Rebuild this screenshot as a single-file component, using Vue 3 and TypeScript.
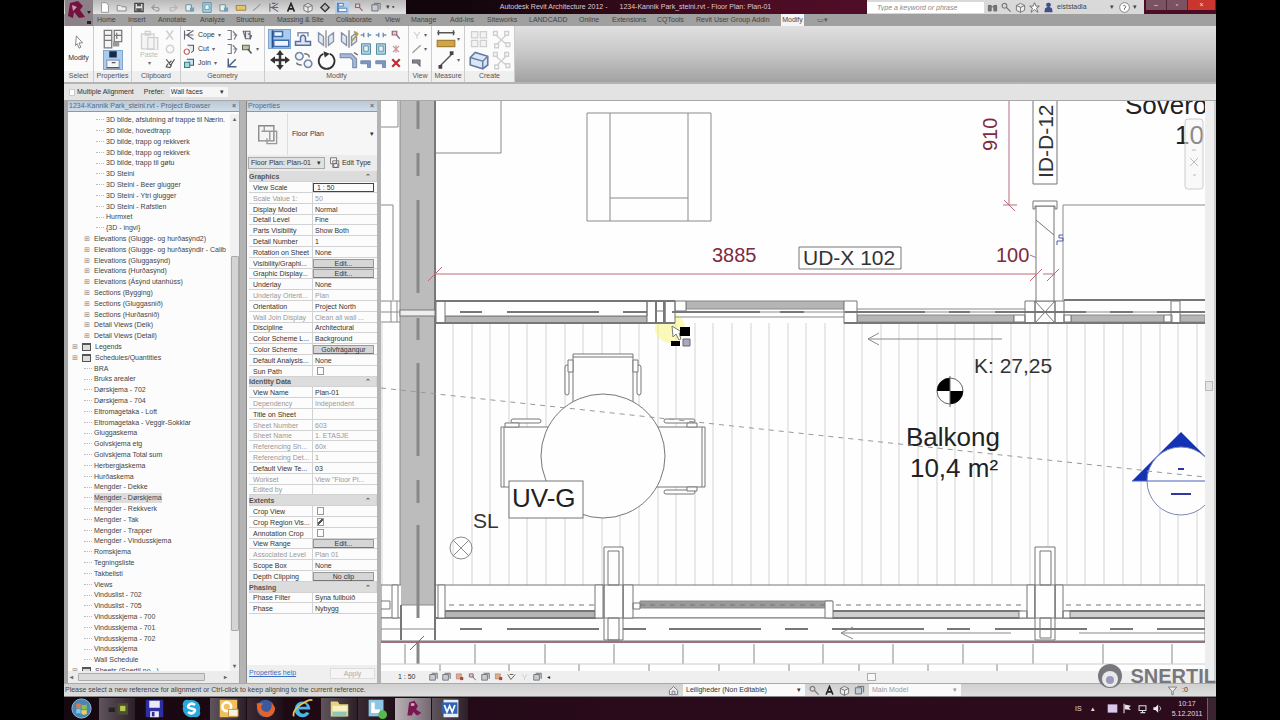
<script setup lang="ts">
interface Shape { d: string; f?: string; s?: string; w?: number }
interface TreeItem { t: string; lv: number; sel?: boolean; box?: boolean }
interface Prop { k: string; v?: string; kind?: 'head' | 'btn' | 'check' | 'on' | 'field'; dim?: boolean }
interface RibbonButton { id: string; label: string; text?: string; big?: boolean; on?: boolean; arrow?: boolean; col: number; row: number }
interface Panel { name: string; cls: string; buttons: RibbonButton[] }

const icons: Record<string, Shape[]> = {
  cursor: [{ d: 'M5 1l7 8h-4l2 5-2 1-2-5-2 2z', f: '#fff', s: '#777', w: 1 }],
  props: [{ d: 'M1 1h6v14H1zM9 1h6v9H9zM1 5h6M1 9h6M9 5h6M11 3v5', f: '#f4f4f6', s: '#777', w: 1 }, { d: 'M8 10h5v4H8z', f: '#999' }],
  palette: [{ d: 'M5 1h6v5H5z', f: '#1d2748' }, { d: 'M3 8h10v7H3z', f: '#f6f6f2', s: '#8b9bbc', w: 1 }, { d: 'M7 10h3M3 14h10', s: '#556', w: 1 }],
  paste: [{ d: 'M2 3h10v12H2zM5 1h4v3H5zM7 6h8v10H7z', f: '#f4f4f4', s: '#cfcfcf', w: 1 }],
  cut: [{ d: 'M3 2l9 12M12 2L3 14', s: '#d0d0d0', w: 2 }],
  ring: [{ d: 'M8 3a5 5 0 1 0 .1 0', s: '#d2d2d2', w: 2 }],
  brush: [{ d: 'M3 3l4 5 3-3M6 8l3 3 5-8M5 9l-2 4 5 1 2-3', s: '#555', w: 1.6 }],
  cope: [{ d: 'M2 2v12M2 8h12M14 2L5 8l9 6M5 2h5', s: '#667', w: 1.5 }],
  cutg: [{ d: 'M6 3h8v7l-3 3', f: '#e8eef6', s: '#557', w: 1.4 }, { d: 'M5 8a3.5 3.5 0 1 0 .1 0', f: '#fff', s: '#c05a5a', w: 1.6 }],
  join: [{ d: 'M5 3h9v8H9', f: '#cfe3f3', s: '#456', w: 1.4 }, { d: 'M2 7h7v7H2z', f: '#9fd8d8', s: '#387c86', w: 1.4 }],
  beam: [{ d: 'M2 2h5v12H2M9 3l5 5-3 6M10 8h5', s: '#778', w: 1.5 }],
  wall: [{ d: 'M3 3h9v10H6zM6 3v10M9 6l5 3-2 5', f: '#e9ecef', s: '#667', w: 1.5 }],
  paint: [{ d: 'M2 3h9v6H2z', f: '#b7c7a2', s: '#576850', w: 1.4 }, { d: 'M9 8l5 6', s: '#555', w: 2 }],
  axes: [{ d: 'M3 2v11h11M4 12l9-9', s: '#4b6388', w: 2 }],
  align: [{ d: 'M2 1v14', s: '#2b4f91', w: 1.4 }, { d: 'M3 2h7v4H3zM3 9h12v5H3z', f: '#eef5fc', s: '#3f6eae', w: 1.2 }],
  offset: [{ d: 'M2 13h12v-3H10V7a2 2 0 0 0-4 0v3H2z', f: '#dfe6f2', s: '#5570a5', w: 1.2 }, { d: 'M4 6V3h8v3', s: '#8792a8', w: 1.2 }],
  mirror: [{ d: 'M8 1v14', s: '#888', w: 1 }, { d: 'M2 3l4 3v7l-4-3zM14 3l-4 3v7l4-3z', f: '#e3e8ef', s: '#8595ae', w: 1.1 }],
  mirror2: [{ d: 'M8 1v14', s: '#777', w: 1 }, { d: 'M2 3l4 3v7l-4-3zM14 3l-4 3v7l4-3z', f: '#e3e8ef', s: '#8090ab', w: 1.1 }, { d: 'M12 2l3 2-5 6', s: '#b99a57', w: 1.4 }],
  move: [{ d: 'M8 0l3 4H9v3h3V5l4 3-4 3V9H9v3h2l-3 4-3-4h2V9H4v2L0 8l4-3v2h3V4H5z', f: '#333' }],
  copy: [{ d: 'M5 2a3 3 0 1 0 .1 0M12 8a3 3 0 1 0 .1 0', f: '#f2f4f8', s: '#7385a8', w: 1.2 }, { d: 'M9 3c3 0 4 1 4 3M7 12c-3 0-4-1-4-2', s: '#777', w: 1.2 }],
  rotate: [{ d: 'M11 3a6.3 6.3 0 1 1-5 0', s: '#333', w: 1.5 }, { d: 'M6 1l5 2-4 3z', f: '#333' }],
  trim: [{ d: 'M1 3h9l4 4v7h-3V8L9 6H1z', f: '#a8bad6', s: '#7e92b5', w: 1 }, { d: 'M12 2l3 2', s: '#666', w: 1.2 }],
  split: [{ d: 'M1 8h5M10 8h5M5 5v6M11 5v6', s: '#6f92b6', w: 1.8 }],
  array: [{ d: 'M2 1h12v14H2z', f: '#a9d5e4', s: '#4a8199', w: 1.2 }, { d: 'M5 4h6v7H5z', f: '#e7f6fb', s: '#567b98', w: 1 }],
  ext: [{ d: 'M1 5h13v9h-4V9H1z', f: '#7d96c2', s: '#64799f', w: 1 }],
  pin: [{ d: 'M3 3h6v5H3zM8 7l5 6', f: '#e1cdd7', s: '#8d6577', w: 1.6 }],
  unpin: [{ d: 'M4 4l8 8M12 4l-8 8M8 3v10', s: '#c99aa2', w: 1.6 }],
  del: [{ d: 'M3 3l10 10M13 3L3 13', s: '#c02c3a', w: 3 }],
  bulb: [{ d: 'M4 4l4 5 4-5M8 9v4', s: '#cfcfcf', w: 1.6 }],
  line: [{ d: 'M2 13L13 3', s: '#999', w: 1.6 }],
  flip: [{ d: 'M2 4h10v8l-4-4H2z', f: '#888', s: '#667', w: 1.4 }],
  ruler: [{ d: 'M1 9h14v5H1z', f: '#cfa545', s: '#a47f34', w: 1 }, { d: 'M1 3h14M2 1v4M14 1v4', s: '#555', w: 1.2 }],
  dim: [{ d: 'M3 13L13 3', s: '#555', w: 1.2 }, { d: 'M2 12h3v3H2zM11 1h3v3h-3z', f: '#444' }],
  group: [{ d: 'M2 2h5v5H2zM9 2h5v5H9zM2 9h5v5H2zM9 9h5v5H9z', f: '#f3f3f3', s: '#d0d0d0', w: 1 }],
  similar: [{ d: 'M1 6l4-4 10 3v7l-4 3-10-3z', f: '#dbe6f4', s: '#6679a0', w: 1.3 }, { d: 'M1 6l10 3 4-4M11 9v6', s: '#6880aa', w: 1.2 }],
  nodes: [{ d: 'M2 2h3v3H2zM11 2h3v3h-3zM3 12h3v3H3zM12 11h3v3h-3zM4 5l8 7M12 5l-7 7', s: '#cfcfcf', w: 1.1 }],
  page: [{ d: 'M3 1h7l3 4v10H3z', f: '#fff', s: '#888', w: 1.2 }],
  open: [{ d: 'M1 13V5h5l2 2h6v6z', f: '#eee', s: '#888', w: 1.4 }],
  save: [{ d: 'M2 2h12v12H2z', f: '#e4e4ea', s: '#444', w: 2 }, { d: 'M5 2h6v4H5zM4 9h8v5H4z', f: '#555' }],
  undo: [{ d: 'M3 8h8a3 3 0 0 1 0 5H7M6 4L2 8l4 4', s: '#999', w: 1.8 }],
  redo: [{ d: 'M13 8H5a3 3 0 0 0 0 5h4M10 4l4 4-4 4', s: '#b5b5b5', w: 1.8 }],
  sync: [{ d: 'M2 4h8v9H2z', f: '#e8f1e8', s: '#6d8a96', w: 1.4 }, { d: 'M8 8h6v6H8z', f: '#6fa0bd' }],
  measure: [{ d: 'M1 5h14v7H1z', f: '#e2c46d', s: '#957637', w: 1.2 }],
  letter: [{ d: 'M3 14L8 2l5 12M5 10h6', s: '#222', w: 2.2 }],
  cube: [{ d: 'M2 5l6-3 6 3v7l-6 3-6-3zM2 5l6 3 6-3M8 8v7', f: '#eee', s: '#666', w: 1.2 }],
  diamond: [{ d: 'M8 2l6 6-6 6-6-6z', f: '#bbb', s: '#333', w: 2 }],
  find: [{ d: 'M2 13V5h4v8zM10 13V5h4v8zM6 7h4', f: '#777', s: '#666', w: 1.4 }],
  key: [{ d: 'M5 2a3.5 3.5 0 1 0 .1 0M8 8l6 6', s: '#777', w: 1.7 }],
  star: [{ d: 'M8 1l2 5h5l-4 3 2 6-5-4-5 4 2-6-4-3h5z', f: '#fff', s: '#666', w: 1.3 }],
  user: [{ d: 'M8 1a3 3 0 0 1 1 6l4 2 1 6H2l1-6 4-2a3 3 0 0 1 1-6', f: '#44508c' }],
  help: [{ d: 'M8 1a7 7 0 1 0 .1 0', f: '#fff', s: '#777', w: 1.3 }, { d: 'M6 6a2 2 0 1 1 2 3v2', s: '#555', w: 1.4 }],
  plan: [{ d: 'M2 2h11v11H2z', f: '#f5f5f5', s: '#888', w: 1 }, { d: 'M6 2v4h4v7M6 6H4M10 6h5v9H8v-4', s: '#999', w: 1 }],
  edit: [{ d: 'M2 1h8v8H2zM5 5h8v9H5z', f: '#f4f4f4', s: '#777', w: 1.3 }, { d: 'M9 8a3 3 0 1 0 .1 0', s: '#555', w: 1.2 }],
  sun: [{ d: 'M3 3h8v8H3z', f: '#e3ac84', s: '#a77', w: 1 }, { d: 'M9 8h5v5H9z', f: '#a44' }],
  crop: [{ d: 'M2 4h9v9H2zM5 2h9v9', f: '#c6ccd6', s: '#666', w: 1.3 }],
  hide: [{ d: 'M2 4l5 8 7-8M5 4h6', s: '#765', w: 1.6 }],
  filter: [{ d: 'M2 3h12l-5 6v5H7V9z', f: '#eee', s: '#777', w: 1.3 }],
  house: [{ d: 'M2 8l6-6 6 6v6H2zM6 14V9h4v5', f: '#e9e9ee', s: '#778', w: 1.4 }],
  flag: [{ d: 'M3 1v14', s: '#ddd', w: 1.6 }, { d: 'M4 2l9 2-3 3 3 3-9-1z', f: '#e6dfe8' }],
  net: [{ d: 'M3 4h10v7H3zM5 14h7M8 11v3', s: '#ddd', w: 1.5 }],
  sound: [{ d: 'M2 6h3l4-4v12l-4-4H2z', f: '#eee' }, { d: 'M11 5c2 2 2 4 0 6', s: '#ddd', w: 1.4 }],
  mail: [{ d: 'M1 2h14v12H1z', f: '#d9c8ec' }],
}

const quick = ['page', 'open', 'save', 'undo', 'redo', 'sync', 'array', 'sync', 'measure', 'line', 'cope', 'letter', 'cube', 'diamond', 'align', 'pin', 'crop']
const tabs = ['Home', 'Insert', 'Annotate', 'Analyze', 'Structure', 'Massing & Site', 'Collaborate', 'View', 'Manage', 'Add-Ins', 'Siteworks', 'LANDCADD', 'Online', 'Extensions', 'CQTools', 'Revit User Group Addin', 'Modify']

const b = (id: string, label: string, col: number, row: number, o: Partial<RibbonButton> = {}): RibbonButton => ({ id, label, col, row, ...o })
const panels: Panel[] = [
  { name: 'Select', cls: 'p-select', buttons: [b('cursor', 'Modify', 1, 1, { text: 'Modify' })] },
  { name: 'Properties', cls: 'p-props', buttons: [b('props', 'Type properties', 1, 1, { big: true }), b('palette', 'Properties', 1, 2, { big: true, on: true })] },
  { name: 'Clipboard', cls: 'p-clip', buttons: [b('paste', 'Paste', 1, 1, { text: 'Paste', big: true, arrow: true }), b('cut', 'Cut', 2, 1), b('ring', 'Copy', 2, 2), b('brush', 'Match', 2, 3)] },
  { name: 'Geometry', cls: 'p-geo', buttons: [
    b('cope', 'Cope', 1, 1, { text: 'Cope', arrow: true }), b('cutg', 'Cut', 1, 2, { text: 'Cut', arrow: true }), b('join', 'Join', 1, 3, { text: 'Join', arrow: true }),
    b('beam', 'Beam joins', 2, 1), b('beam', 'Split face', 2, 2), b('axes', 'Demolish', 2, 3), b('wall', 'Wall joins', 3, 1), b('paint', 'Paint', 3, 2, { arrow: true })] },
  { name: 'Modify', cls: 'p-mod', buttons: [
    b('align', 'Align', 1, 1, { big: true, on: true }), b('offset', 'Offset', 2, 1, { big: true }), b('mirror', 'Mirror axis', 3, 1, { big: true }), b('mirror2', 'Mirror draw', 4, 1, { big: true }),
    b('move', 'Move', 1, 4, { big: true }), b('copy', 'Copy', 2, 4, { big: true }), b('rotate', 'Rotate', 3, 4, { big: true }), b('trim', 'Trim', 4, 4, { big: true }),
    b('split', 'Split', 5, 1), b('split', 'Split gap', 6, 1), b('pin', 'Pin', 7, 1), b('array', 'Array', 5, 3), b('array', 'Scale', 6, 3), b('unpin', 'Unpin', 7, 3),
    b('ext', 'Trim single', 5, 5), b('ext', 'Trim multiple', 6, 5), b('del', 'Delete', 7, 5)] },
  { name: 'View', cls: 'p-view', buttons: [b('bulb', 'Hide', 1, 1, { arrow: true }), b('line', 'Override', 1, 2, { arrow: true }), b('flip', 'Linework', 1, 3)] },
  { name: 'Measure', cls: 'p-meas', buttons: [b('ruler', 'Measure', 1, 1, { big: true, arrow: true }), b('dim', 'Dimension', 1, 2, { big: true, arrow: true })] },
  { name: 'Create', cls: 'p-create', buttons: [b('group', 'Assembly', 1, 1, { big: true }), b('nodes', 'Parts', 2, 1, { big: true }), b('similar', 'Create similar', 1, 2, { big: true }), b('nodes', 'Group', 2, 2, { big: true })] },
]

const leaf3 = ['3D bilde, afslutning af trappe til Nærin.', '3D bilde, hovedtrapp', '3D bilde, trapp og  rekkverk', '3D bilde, trapp og rekkverk', '3D bilde, trapp til gøtu', '3D Steini', '3D Steini - Beer glugger', '3D Steini - Ytri glugger', '3D Steini - Rafstien', 'Hurmxet', '{3D - ingvi}']
const leaf2 = ['Elevations (Glugge- og hurðasýnd2)', 'Elevations (Glugge- og hurðasýndir - Calib', 'Elevations (Gluggasýnd)', 'Elevations (Hurðasýnd)', 'Elevations (Ásýnd utanhúss)', 'Sections (Bygging)', 'Sections (Gluggasnið)', 'Sections (Hurðasnið)', 'Detail Views (Deik)', 'Detail Views (Detail)']
const leaf1 = ['BRA', 'Bruks arealer', 'Dørskjema - 702', 'Dørskjema - 704', 'Eltromagetaka - Loft', 'Eltromagetaka - Veggir-Sokklar', 'Gluggaskema', 'Golvskjema etg', 'Golvskjema Total sum', 'Herbergjaskema', 'Hurðaskema', 'Mengder - Dekke', 'Mengder - Dørskjema', 'Mengder - Rekkverk', 'Mengder - Tak', 'Mengder - Trapper', 'Mengder - Vindusskjema', 'Romskjema', 'Tegningsliste', 'Takbelisti', 'Views', 'Vinduslist - 702', 'Vinduslist - 705', 'Vindusskjema - 700', 'Vindusskjema - 701', 'Vindusskjema - 702', 'Vindusskjema', 'Wall Schedule']
const tree: TreeItem[] = [
  ...leaf3.map((t) => ({ t, lv: 3 })),
  ...leaf2.map((t) => ({ t, lv: 2, box: true })),
  { t: 'Legends', lv: 0, box: true },
  { t: 'Schedules/Quantities', lv: 0, box: true },
  ...leaf1.map((t) => ({ t, lv: 1, sel: t === 'Mengder - Dørskjema' })),
  { t: 'Sheets (Snertil no...)', lv: 0, box: true },
]

const props: Prop[] = [
  { k: 'Graphics', kind: 'head' }, { k: 'View Scale', v: '1 : 50', kind: 'field' }, { k: 'Scale Value    1:', v: '50', dim: true }, { k: 'Display Model', v: 'Normal' },
  { k: 'Detail Level', v: 'Fine' }, { k: 'Parts Visibility', v: 'Show Both' }, { k: 'Detail Number', v: '1' }, { k: 'Rotation on Sheet', v: 'None' },
  { k: 'Visibility/Graphi...', v: 'Edit...', kind: 'btn' }, { k: 'Graphic Display...', v: 'Edit...', kind: 'btn' }, { k: 'Underlay', v: 'None' }, { k: 'Underlay Orient...', v: 'Plan', dim: true },
  { k: 'Orientation', v: 'Project North' }, { k: 'Wall Join Display', v: 'Clean all wall ...', dim: true }, { k: 'Discipline', v: 'Architectural' }, { k: 'Color Scheme L...', v: 'Background' },
  { k: 'Color Scheme', v: 'Golvfrágangur', kind: 'btn' }, { k: 'Default Analysis...', v: 'None' }, { k: 'Sun Path', kind: 'check' },
  { k: 'Identity Data', kind: 'head' }, { k: 'View Name', v: 'Plan-01' }, { k: 'Dependency', v: 'Independent', dim: true }, { k: 'Title on Sheet', v: '' }, { k: 'Sheet Number', v: '603', dim: true },
  { k: 'Sheet Name', v: '1. ETASJE', dim: true }, { k: 'Referencing Sh...', v: '60x', dim: true }, { k: 'Referencing Det...', v: '1', dim: true }, { k: 'Default View Te...', v: '03' },
  { k: 'Workset', v: 'View "Floor Pl...', dim: true }, { k: 'Edited by', v: '', dim: true }, { k: 'Extents', kind: 'head' }, { k: 'Crop View', kind: 'check' }, { k: 'Crop Region Vis...', kind: 'on' },
  { k: 'Annotation Crop', kind: 'check' }, { k: 'View Range', v: 'Edit...', kind: 'btn' }, { k: 'Associated Level', v: 'Plan 01', dim: true }, { k: 'Scope Box', v: 'None' },
  { k: 'Depth Clipping', v: 'No clip', kind: 'btn' }, { k: 'Phasing', kind: 'head' }, { k: 'Phase Filter', v: 'Syna fullbúið' }, { k: 'Phase', v: 'Nybygg' },
]

const viewIcons = ['crop', 'crop', 'sun', 'pin', 'crop', 'sun', 'hide', 'bulb', 'crop']
const deck = Array.from({ length: 41 }, (_, i) => 453 + Math.round(i * 18.6))
const grid1 = [405, 475, 545, 614, 683, 754, 823, 893, 963, 1033, 1103, 1172]
const grid2 = [440, 509, 579, 649, 719, 789, 859, 928, 997, 1067]
</script>

<template>
  <div class="screen">
    <div class="app">
      <header class="titlebar">
        <div class="quick">
          <button v-for="(q, i) in quick" :key="i" type="button" :class="{ on: q === 'align' }" :aria-label="q">
            <svg viewBox="0 0 16 16"><path v-for="(s, j) in icons[q]" :key="j" :d="s.d" :fill="s.f || 'none'" :stroke="s.s" :stroke-width="s.w" /></svg>
          </button>
          <span class="mini">▾ ▪</span>
        </div>
        <h1><span>Autodesk Revit Architecture 2012 -</span><span>1234-Kannik Park_steini.rvt - Floor Plan: Plan-01</span></h1>
        <div class="search">
          <input type="text" aria-label="Search help" placeholder="Type a keyword or phrase">
          <button v-for="q in ['find', 'key', 'cube', 'star', 'user']" :key="q" type="button" :aria-label="q">
            <svg viewBox="0 0 16 16"><path v-for="(s, j) in icons[q]" :key="j" :d="s.d" :fill="s.f || 'none'" :stroke="s.s" :stroke-width="s.w" /></svg>
          </button>
          <span class="account">eiststadla</span><span class="tri">▾</span>
          <button type="button" aria-label="Help">
            <svg viewBox="0 0 16 16"><path v-for="(s, j) in icons.help" :key="j" :d="s.d" :fill="s.f || 'none'" :stroke="s.s" :stroke-width="s.w" /></svg>
          </button>
          <span class="tri">▾</span>
        </div>
        <div class="win">
          <button type="button" aria-label="Minimize">–</button><button type="button" aria-label="Restore">▫</button><button type="button" class="close" aria-label="Close">×</button>
        </div>
      </header>
      <nav class="tabs">
        <button v-for="t in tabs" :key="t" type="button" :class="{ active: t === 'Modify' }">{{ t }}</button>
        <span class="tabend">▭▾</span>
      </nav>
      <button class="logo" type="button" aria-label="Application menu">
        <svg viewBox="0 0 28 26"><path d="M0 0h28v26H0z" fill="#8c8089" /><path d="M5 3l8-2 5 5-3 4 5 7-6 1-5-6-1 6-5-2z" fill="#72133f" /><path d="M7 5l5 2-4 4zM12 11l4 4" fill="#d698b4" /><path d="M22 11h4l-2 3zM22 21h4v3h-4z" fill="#222" /></svg>
      </button>

      <div class="ribbon">
        <section v-for="p in panels" :key="p.name" class="panel" :class="p.cls">
          <div class="tools">
            <button
              v-for="(x, i) in p.buttons" :key="i" type="button" :aria-label="x.label"
              :class="['c' + x.col, 'r' + x.row, { big: x.big, on: x.on }]"
            >
              <svg viewBox="0 0 16 16"><path v-for="(s, j) in icons[x.id]" :key="j" :d="s.d" :fill="s.f || 'none'" :stroke="s.s" :stroke-width="s.w" /></svg>
              <span v-if="x.text">{{ x.text }}</span><i v-if="x.arrow">▾</i>
            </button>
          </div>
          <h2>{{ p.name }}</h2>
        </section>
      </div>

      <div class="options">
        <label><input type="checkbox">Multiple Alignment</label>
        <label class="prefer">Prefer: <select><option>Wall faces</option></select></label>
      </div>

      <main class="work">
        <aside class="browser">
          <h3><span>1234-Kannik Park_steini.rvt - Project Browser</span><b>×</b></h3>
          <div class="treewrap">
            <ul>
              <li v-for="(n, i) in tree" :key="i" :class="['lv' + n.lv, { sel: n.sel }]">
                <em v-if="n.box">⊞</em><i v-if="n.box && n.lv === 0" class="sheet" /><span>{{ n.t }}</span>
              </li>
            </ul>
            <div class="vbar"><b>▴</b><div class="thumb" /><b>▾</b></div>
          </div>
          <div class="hbar"><b>◂</b><div class="hthumb" /><b>▸</b></div>
        </aside>

        <aside class="properties">
          <h3><span>Properties</span><b>×</b></h3>
          <div class="type">
            <div class="thumbnail"><svg viewBox="0 0 16 16"><path v-for="(s, j) in icons.plan" :key="j" :d="s.d" :fill="s.f || 'none'" :stroke="s.s" :stroke-width="s.w" /></svg></div>
            <span>Floor Plan</span><i>▾</i>
          </div>
          <div class="inst">
            <label><select aria-label="Instance"><option>Floor Plan: Plan-01</option></select></label>
            <button type="button"><svg viewBox="0 0 16 16"><path v-for="(s, j) in icons.edit" :key="j" :d="s.d" :fill="s.f || 'none'" :stroke="s.s" :stroke-width="s.w" /></svg>Edit Type</button>
          </div>
          <table>
            <tbody>
              <tr v-for="(p, i) in props" :key="i" :class="{ head: p.kind === 'head', dim: p.dim }">
                <th :colspan="p.kind === 'head' ? 2 : 1"><span>{{ p.k }}</span><b v-if="p.kind === 'head'">⌃</b></th>
                <td v-if="p.kind !== 'head'">
                  <button v-if="p.kind === 'btn'" type="button">{{ p.v }}</button>
                  <input v-else-if="p.kind === 'field'" type="text" :value="p.v" :aria-label="p.k">
                  <input v-else-if="p.kind === 'check' || p.kind === 'on'" type="checkbox" :checked="p.kind === 'on'" :aria-label="p.k">
                  <template v-else>{{ p.v }}</template>
                </td>
              </tr>
            </tbody>
          </table>
          <footer><a href="#">Properties help</a><button type="button">Apply</button></footer>
        </aside>

        <section class="view">
          <svg class="plan" viewBox="381 101 824 570" preserveAspectRatio="xMinYMin slice" role="img" aria-label="Floor plan Plan-01">
            <rect x="381" y="101" width="824" height="571" fill="#fefefe" />
            <g class="deck">
              <line v-for="x in deck" :key="x" :x1="x" :x2="x" y1="323" y2="585" />
              <line x1="382" x2="382" y1="323" y2="585" />
            </g>
            <circle cx="670" cy="328" r="15" fill="#f7f58c" opacity=".6" />

            <g class="ln">
              <path d="M398 101v26M381 127h17M381 205h12v95M501 101v52M435 153h66" />
              <path d="M587 113h124v108H587zM610 113v108M688 113v108M610 198h78" />
              <path d="M1205 205H1063v96" />
            </g>

            <rect x="400" y="101" width="35" height="504" fill="#bcbcbc" />
            <path class="ln" d="M400 101v539" /><path class="dk" d="M435 101v539" />
            <path class="axis" d="M418 101v28M418 153v23M418 200v93M418 318v22M418 363v93M418 480v23M418 525v93M418 636v28" />
            <rect x="400" y="310" width="35" height="6" fill="#eee" stroke="#777" />

            <g class="ln">
              <path d="M381 301h19M381 312h19M381 322h19M391 301v21M397 301v21" />
              <path d="M445 316h202v7H445z" fill="#b5b5b5" />
              <path d="M686 301h158v8H686z" fill="#b5b5b5" /><path d="M686 312h158M665 317h179" />
              <path d="M857 309h168M857 312h168" /><path d="M857 315h157v7H857z" fill="#b5b5b5" />
              <path d="M1064 312h141" /><path d="M1071 315h93v7h-93zM1180 315h25v7h-25z" fill="#b5b5b5" />
            </g>
            <g class="bx">
              <path d="M436 301h9v22h-9zM445 301h202v15H445M647 301h9v22h-9zM656 301h9v22h-9zM656 311h9M665 301h10v22h-10zM675 301h11v10h-11zM844 301h13v22h-13zM844 312h13" />
              <path d="M1014 315h11v7h-11zM1025 301h10v22h-10zM1035 301h20v22h-20zM1055 301h9v22h-9zM1035 301l20 22M1055 301l-20 22M1064 315h7v7h-7zM1171 301h9v22h-9zM1164 315h8v7h-8z" />
            </g>
            <path class="dk" d="M436 301h239M436 323h239M656 301v22M664 301v22M1064 300h141M844 323h361" />
            <path class="axis2" d="M460 312h22M507 312h92M623 312h24M672 312h88M780 312h24M845 312h80M949 312h21M995 312h91M1110 312h23M1157 312h48" />

            <g class="dimline">
              <path d="M435 274h620M428 281l14-14M1030 281l12-12M1047 281l12-12M1009 101v104" />
              <path d="M1003 205h14M1004 200l11 11M1030 255q12 3 14 19" />
            </g>
            <g class="bx">
              <path d="M1036 206h18v95h-18z" /><path d="M1033 201h24v8h-2v-3h-20v3h-2z" /><path d="M1036 220l18 15" fill="none" />
              <path d="M1033 95h24v89h-24z" /><path d="M799 247h102v22H799z" />
            </g>
            <path d="M1063 235h-4v3h4v3h-6v4" fill="none" stroke="#5058b8" />
            <path class="dimline" d="M1043 274h12M1030 281l12-12M1047 281l12-12" />
            <g class="red t20">
              <text x="712" y="262">3885</text><text x="996" y="262">100</text>
              <text transform="translate(997 151) rotate(-90)">910</text>
            </g>
            <g class="t21">
              <text x="803" y="265">UD-X 102</text><text x="974" y="373">K: 27,25</text><text x="473" y="528">SL</text>
              <text transform="translate(1053 178) rotate(-90)">ID-D-12</text>
            </g>
            <g class="t26">
              <text x="1125" y="114">Soverom</text><text x="1175" y="144">10</text>
              <text x="953" y="446" text-anchor="middle">Balkong</text><text x="954" y="477" text-anchor="middle">10,4 m²</text>
            </g>

            <g class="bx">
              <path d="M573 354h60v60h-60zM573 357h60" />
              <rect x="565" y="365" width="4" height="30" rx="2" /><rect x="637" y="365" width="4" height="30" rx="2" /><path d="M568 360h5v12h-5zM633 360h5v12h-5z" />
              <path d="M501 427h60v60h-60zM504 427v60M645 427h60v60h-60zM702 427v60" />
              <rect x="511" y="419" width="30" height="4" rx="2" /><rect x="664" y="419" width="31" height="4" rx="2" /><rect x="664" y="490" width="31" height="4" rx="2" />
              <path d="M505 423h14v4h-14zM687 423h10v4h-10zM687 487h10v4h-10z" />
              <circle cx="603" cy="456" r="62" /><rect x="509" y="481" width="74" height="37" />
            </g>
            <text class="uvg" x="512" y="507">UV-G</text>
            <path d="M381 388L1205 477" fill="none" stroke="#999" stroke-dasharray="5 5" />
            <g class="ln"><circle cx="461" cy="548" r="11" /><path d="M453 540l16 16M469 540l-16 16" /><path d="M1002 339H868M879 333l-11 6 11 6" /></g>
            <circle cx="950" cy="391" r="13" fill="#fff" stroke="#666" />
            <path d="M950 391v-13a13 13 0 0 0-13 13zM950 391v13a13 13 0 0 0 13-13z" fill="#000" /><path d="M950 376v31" stroke="#666" />

            <path d="M1132 481l49-49 49 49z" fill="#1432b4" />
            <circle cx="1181" cy="481" r="34" fill="#fefefe" stroke="#8088b0" />
            <path d="M1132 481h73" stroke="#4a62b8" /><path d="M1178 469h6M1171 494h20" stroke="#3038a0" stroke-width="2" />
            <path d="M1147 471L1205 477" fill="none" stroke="#999" stroke-dasharray="5 5" />

            <g class="bx">
              <path d="M381 585h824v33H381z" /><path d="M381 618h824v23H381z" />
            </g>
            <rect x="401" y="605" width="34" height="35" fill="#fefefe" /><rect x="401" y="584" width="34" height="21" fill="#bcbcbc" />
            <g class="ln">
              <path d="M445 611h150v7H445z" fill="#b5b5b5" /><path d="M640 601h192v7H640z" fill="#9a9a9a" />
              <path d="M832 611h190v7H832zM1064 611h141v7h-141z" fill="#cfcfcf" />
              <path d="M401 605h34M381 629h54" />
            </g>
            <path class="dk" d="M401 605v35M435 584v56M445 611h150M832 611h187M832 618h187M1070 611h135M1070 618h135M436 618h160" />
            <path class="axis" d="M418 584v34" />
            <path class="short" d="M449 605h150M640 605h190M836 605h190M1066 605h139" />
            <g class="bx">
              <path d="M381 601h9v8h-9zM392 585h6v33h-6zM438 585h7v33h-7zM595 585h8v33h-8zM623 585h10v33h-10zM633 603h7v6h-7zM825 601h8v17h-8zM1019 611h8v7h-8zM1027 585h8v33h-8zM1055 585h8v33h-8zM1063 611h7v7h-7z" />
              <path d="M604 547h19v93h-19zM608 551h11v34h-11zM608 618h11v22h-11zM604 585h19v33h-19z" /><path d="M1035 547h20v93h-20zM1040 551h11v34h-11zM1040 618h11v20h-11zM1035 585h20v33h-20z" />
            </g>
            <path class="axis2" d="M460 629h22M507 629h92M623 629h23M669 629h92M785 629h23M832 629h92M947 629h23M995 629h92M1110 629h23M1157 629h48" />
            <g class="ln"><path d="M1011 633H841M853 627l-12 6 12 6M1079 633h126" /></g>
            <path d="M381 642h824" stroke="#a2707c" stroke-width="2" /><path d="M410 650l14-14" stroke="#b34a5a" />
            <g class="ln">
              <path v-for="x in grid1" :key="x" :d="`M${x} 644v20`" /><path v-for="x in grid2" :key="x" :d="`M${x} 664v7`" />
            </g>
            <path d="M381 664h824" stroke="#ccc" />

            <path d="M672 326l1 11 3-3 3 6 2-1-2-6h4z" fill="#fff" stroke="#777" />
            <path d="M680 327h10v9h-10zM671 341h9v5h-9z" fill="#000" /><path d="M683 339h7v7h-7z" fill="#aab" stroke="#667" />
            <g><rect x="1185" y="119" width="18" height="70" rx="3" fill="#f4f4f4" fill-opacity=".5" stroke="#ccc" /><path d="M1190 158l8 8M1198 158l-8 8M1192 150h4M1193 175h3" stroke="#bbb" fill="none" /></g>
          </svg>
          <div class="viewbar">
            <span>1 : 50</span>
            <button v-for="(q, i) in viewIcons" :key="i" type="button" :aria-label="'View control ' + (i + 1)">
              <svg viewBox="0 0 16 16"><path v-for="(s, j) in icons[q]" :key="j" :d="s.d" :fill="s.f || 'none'" :stroke="s.s" :stroke-width="s.w" /></svg>
            </button>
            <i>◂</i><div class="grip" />
          </div>
        </section>
        <div class="rail"><div class="knob" /></div>
      </main>

      <footer class="status">
        <p>Please select a new reference for alignment or Ctrl-click to keep aligning to the current reference.</p>
        <svg viewBox="0 0 16 16"><path v-for="(s, j) in icons.house" :key="j" :d="s.d" :fill="s.f || 'none'" :stroke="s.s" :stroke-width="s.w" /></svg>
        <label class="ws"><select aria-label="Workset"><option>Leiligheder (Non Editable)</option></select></label>
        <svg v-for="q in ['key', 'letter', 'cube', 'crop']" :key="q" viewBox="0 0 16 16"><path v-for="(s, j) in icons[q]" :key="j" :d="s.d" :fill="s.f || 'none'" :stroke="s.s" :stroke-width="s.w" /></svg>
        <label class="mm"><select aria-label="Design option"><option>Main Model</option></select></label>
        <span class="fill" />
        <svg viewBox="0 0 16 16"><path v-for="(s, j) in icons.filter" :key="j" :d="s.d" :fill="s.f || 'none'" :stroke="s.s" :stroke-width="s.w" /></svg><span class="zero">:0</span>
      </footer>

      <div class="taskbar">
        <button type="button" aria-label="Start"><svg viewBox="0 0 24 24"><circle cx="12" cy="12" r="11" fill="#4a86b4" stroke="#9cc4dc" /><path d="M6 7q3-2 5 0v5q-2-2-5 0z" fill="#e57a43" /><path d="M12 7q3 2 6 0v5q-3 2-6 0z" fill="#8cc04c" /><path d="M6 13q3-2 5 0v5q-2-2-5 0z" fill="#7cc7ee" /><path d="M12 13q3 2 6 0v5q-3 2-6 0z" fill="#f0cf56" /></svg></button>
        <button type="button" class="lit" aria-label="Display"><svg viewBox="0 0 24 24"><path d="M12 6h12v13H12z" fill="#4a4f32" /><path d="M15 9h6v6h-6z" fill="#b9c84e" /><path d="M2 11h7v5H2z" fill="#222" /></svg></button>
        <button type="button" aria-label="Save"><svg viewBox="0 0 24 24"><path d="M2 2h20v20H2z" fill="#2d2f9e" /><path d="M6 3h12v8H6zM7 15h10v7H7z" fill="#e9e9fa" /><path d="M9 16h3v5H9z" fill="#2d2f9e" /></svg></button>
        <button type="button" aria-label="Skype"><svg viewBox="0 0 24 24"><circle cx="12" cy="12" r="10" fill="#28a8dc" /><circle cx="7" cy="7" r="5" fill="#28a8dc" /><circle cx="17" cy="17" r="5" fill="#28a8dc" /><path d="M16 8q-4-3-7 0t3 4 3 4-7 0" fill="none" stroke="#fff" stroke-width="3" /></svg></button>
        <button type="button" class="lit" aria-label="Outlook"><svg viewBox="0 0 24 24"><path d="M2 2h20v20H2z" fill="#f0c05c" /><circle cx="10" cy="10" r="5" fill="none" stroke="#fff" stroke-width="3" /><path d="M12 13h11v8H12z" fill="#f8f3df" stroke="#b98b37" /></svg></button>
        <button type="button" class="lit2" aria-label="Firefox"><svg viewBox="0 0 24 24"><circle cx="12" cy="12" r="10" fill="#3b5a9e" /><path d="M2 6q0 15 12 16 9-2 9-11l-4-6q1 10-6 11-6-1-6-6l2-4z" fill="#e2632b" /></svg></button>
        <button type="button" aria-label="Internet Explorer"><svg viewBox="0 0 24 24"><path d="M20 17q-3 5-8 5a9 9 0 1 1 9-9H8q1 5 5 5 2 0 3-2zM8 10h9q-1-4-4-4t-5 4z" fill="#48b7e6" /><path d="M2 21q-2-7 9-14T23 3" fill="none" stroke="#e9c64d" stroke-width="2" /></svg></button>
        <button type="button" class="lit" aria-label="Explorer"><svg viewBox="0 0 24 24"><path d="M2 4h8l2 3h10v14H2z" fill="#e7d37c" /><path d="M4 9h17v6H4z" fill="#f7f0c0" /><path d="M4 16h16v5H4z" fill="#8fc8b8" /></svg></button>
        <button type="button" class="lit2" aria-label="Lync"><svg viewBox="0 0 24 24"><path d="M3 2h17v19H3z" fill="#8cc6e4" /><path d="M8 5v10h8" fill="none" stroke="#fff" stroke-width="4" /><circle cx="19" cy="19" r="5" fill="#58b84c" /></svg></button>
        <button type="button" class="lit bright" aria-label="Revit"><svg viewBox="0 0 24 24"><path d="M5 20l2-15 6-2 4 6-2 4 6 4-5 3-4-4-2 4z" fill="#7a1750" /><path d="M9 6h4v3H9z" fill="#d9a8c2" /></svg></button>
        <button type="button" class="lit" aria-label="Word"><svg viewBox="0 0 24 24"><path d="M4 2h17v20H4z" fill="#e5eefb" /><path d="M2 5h18v13H2z" fill="#2f62b4" /><path d="M5 8l3 8 3-7 3 7 3-8" fill="none" stroke="#fff" stroke-width="2" /></svg></button>
        <span class="fill" />
        <span class="lang">IS</span><span class="up">▴</span>
        <svg v-for="q in ['mail', 'flag', 'net', 'sound']" :key="q" class="tray" viewBox="0 0 16 16"><path v-for="(s, j) in icons[q]" :key="j" :d="s.d" :fill="s.f || 'none'" :stroke="s.s" :stroke-width="s.w" /></svg>
        <time>10:17<br>5.12.2011</time>
        <span class="peek" />
      </div>

      <div class="mark">
        <svg viewBox="0 0 26 24"><circle cx="13" cy="12" r="12" fill="#77777c" /><circle cx="13" cy="15" r="8" fill="#e9e9ec" /><circle cx="13" cy="16" r="4" fill="#9a9ab8" /></svg><span>SNERTIL</span>
      </div>
    </div>
  </div>
</template>

<style>
html, body { height: 100%; background: #000; }
</style>

<style scoped>
* { box-sizing: border-box; margin: 0; padding: 0; }
.screen { height: 100vh; padding: 0 5%; background: #000; font: 7px/10px "Liberation Sans", Arial, sans-serif; color: #333; overflow: hidden; }
.app { position: relative; height: 100%; display: flex; flex-direction: column; background: #d8d8d8; overflow: hidden; }
button, input, select { font: inherit; color: inherit; border: 0; background: none; border-radius: 0; appearance: none; }
button { white-space: nowrap; }
svg { display: block; }
i, em { font-style: normal; }
h1, h2, h3 { font: inherit; }

.titlebar { height: 14px; flex: none; display: flex; background: linear-gradient(90deg, #12060c 0 35%, #4c0c24 60%, #5a1030); color: #ddc9d0; }
.quick { width: 342px; padding-left: 34px; display: flex; align-items: center; justify-content: space-between; background: linear-gradient(#b9b9b9, #e3e3e3); flex: none; color: #444; }
.quick button { width: 14px; height: 13px; padding: 1px; }
.quick .on { background: #b4cdea; }
.quick svg { width: 12px; height: 11px; }
.mini { width: 20px; white-space: nowrap; }
h1 { flex: 1; display: flex; justify-content: center; gap: 12px; white-space: nowrap; line-height: 14px; padding-right: 2px; }
.search { width: 277px; flex: none; display: flex; align-items: center; gap: 3px; background: #d9d9d9; color: #444; }
.search input { width: 117px; height: 11px; background: #fff; padding: 0 10px; }
.search input::placeholder { color: #888; font-style: italic; }
.search button, .search svg { width: 11px; height: 11px; }
.account { width: 50px; }
.tri { width: 6px; }
.win { width: 72px; padding-left: 2px; display: flex; flex: none; background: #4c0c24; }
.win button { width: 21px; height: 10px; background: #7a5262; color: #eee; border-right: 1px solid #4c2c38; line-height: 8px; }
.win .close { flex: 1; background: #c8362e; }

.tabs { height: 12px; flex: none; display: grid; grid-template-columns: 31px 30px 42px 36px 41px 59px 49px 26px 39px 37px 42px 50px 33px 45px 39px 80px 32px 1fr; padding-left: 33px; background: #a0a0a0; line-height: 12px; }
.tabs button { text-align: left; color: #444; overflow: visible; }
.tabs .active { background: #f4f4f4; margin: 0 4px 0 5px; text-align: center; }
.tabend { padding-left: 9px; color: #555; }
.logo { position: absolute; left: 1px; top: 0; width: 28px; height: 26px; }
.logo svg { width: 28px; height: 26px; }

.ribbon { height: 58px; flex: none; display: flex; background: linear-gradient(#e0e0e0, #c6c6c6 50%, #a2a2a2); border-bottom: 2px solid #b4b4b4; }
.panel { display: flex; flex-direction: column; background: #fbfbfb; border-right: 1px solid #ccc; }
.panel h2 { height: 11px; line-height: 10px; background: #efefef; text-align: center; color: #555; }
.tools { flex: 1; display: grid; grid-template-rows: repeat(3, 14px); padding: 2px 2px 0; align-items: center; justify-content: start; }
.tools button { display: flex; align-items: center; gap: 3px; padding: 0; }
.tools svg { width: 12px; height: 12px; flex: none; }
.tools .big svg { width: 20px; height: 20px; }
.tools .on { background: #a9cbed; outline: 1px solid #7fa6d0; outline-offset: -1px; }
.tools i { font-size: 6px; color: #666; }
.c1 { grid-column: 1; } .c2 { grid-column: 2; } .c3 { grid-column: 3; } .c4 { grid-column: 4; } .c5 { grid-column: 5; } .c6 { grid-column: 6; } .c7 { grid-column: 7; }
.r1 { grid-row: 1; } .r2 { grid-row: 2; } .r3 { grid-row: 3; }
.p-select { width: 30px; } .p-props { width: 38px; } .p-clip { width: 49px; } .p-geo { width: 84px; } .p-mod { width: 144px; } .p-view { width: 23px; } .p-meas { width: 33px; } .p-create { width: 50px; }
.p-select .tools, .p-props .tools, .p-meas .tools, .p-create .tools { grid-template-rows: repeat(2, 21px); justify-content: center; }
.p-select .tools { grid-template-rows: 42px; }
.p-select .tools button { flex-direction: column; gap: 4px; }
.p-select .tools svg { width: 14px; height: 14px; }
.p-create .tools { column-gap: 2px; }
.p-meas .tools button { gap: 1px; }
.p-clip .tools { grid-template-columns: 30px 14px; }
.p-clip .big { grid-row: 1 / 4; flex-direction: column; gap: 0; color: #bbb; line-height: 9px; }
.p-geo .tools { grid-template-columns: 43px 15px 20px; }
.p-mod .tools { grid-template-columns: repeat(4, 23px) 15px 15px 15px; grid-template-rows: repeat(6, 7px); justify-content: center; }
.p-mod .tools .big { grid-row: 1 / 4; justify-content: center; }
.p-mod .tools .big.r4 { grid-row: 4 / 7; }
.p-mod .r1 { grid-row: 1 / 3; } .p-mod .r3 { grid-row: 3 / 5; } .p-mod .r5 { grid-row: 5 / 7; }
.p-view .tools button { gap: 1px; }

.options { height: 17px; flex: none; display: flex; align-items: center; gap: 10px; padding-left: 5px; background: #e3e3e3; border-bottom: 1px solid #a8a8a8; }
.options label { display: flex; align-items: center; gap: 2px; }
.options input { width: 6px; height: 7px; background: #fff; border: 1px solid #ccc; }
.options select { width: 58px; height: 10px; background: #f6f6f6; margin-left: 3px; padding-left: 1px; }
.prefer::after { content: "▾"; margin-left: -10px; }

.work { flex: 1; min-height: 0; display: flex; background: #b4b4b4; }
aside { display: flex; flex-direction: column; flex: none; background: #fcfcfc; }
.browser { width: 176px; border: solid #a5a5a5; border-width: 0 1px 0 4px; }
.properties { width: 131px; margin-left: 6px; border-left: 1px solid #888; }
h3 { height: 11px; flex: none; display: flex; justify-content: space-between; padding: 0 3px 0 1px; background: linear-gradient(#b9c9d8, #cfdce8); border-bottom: 1px solid #8d9aa5; color: #56697c; white-space: nowrap; }
.treewrap { flex: 1; min-height: 0; display: flex; overflow: hidden; padding-top: 2px; }
ul { flex: 1; min-width: 0; list-style: none; overflow: hidden; }
li { height: 11px; display: flex; align-items: center; white-space: nowrap; color: #444; }
li:nth-child(5n) { height: 10px; }
li em { width: 10px; flex: none; color: #888; }
.lv3 { padding-left: 38px; } .lv2 { padding-left: 16px; } .lv1 { padding-left: 26px; } .lv0 { padding-left: 4px; }
.lv3::before, .lv1::before { content: ""; width: 8px; flex: none; margin-left: -10px; margin-right: 2px; border-top: 1px dotted #bbb; }
.sheet { width: 9px; height: 8px; flex: none; background: #ddd; border: 1px solid #555; border-top-width: 2px; margin-right: 4px; }
.sel span { background: #dcdcdc; }
.vbar { width: 9px; display: flex; flex-direction: column; background: #f1f1f1; font-size: 6px; color: #666; align-items: center; }
.thumb { width: 8px; margin-top: 132px; flex: 1; margin-bottom: 30px; background: #d4d4d4; border: 1px solid #aaa; border-radius: 1px; }
.hbar { height: 12px; flex: none; display: flex; align-items: center; background: #ececec; padding: 0 12px 0 2px; gap: 5px; font-size: 6px; color: #666; }
.hthumb { flex: 1; height: 8px; margin-right: 14px; background: #dadada; border: 1px solid #aaa; border-radius: 1px; }

.type { height: 43px; flex: none; display: flex; align-items: center; background: #f6f6f6; padding-right: 3px; }
.thumbnail { width: 41px; height: 42px; display: flex; align-items: center; justify-content: center; border-right: 1px solid #ddd; margin-right: 4px; }
.thumbnail svg { width: 22px; height: 22px; }
.type span { flex: 1; }
.inst { height: 16px; flex: none; display: flex; align-items: center; justify-content: space-between; padding: 0 6px 0 1px; background: #ececec; }
.inst label, .ws, .mm { display: flex; align-items: center; }
.inst label::after, .ws::after, .mm::after { content: "▾"; margin-left: -8px; }
.inst select { width: 77px; height: 12px; border: 1px solid #aaa; background: #e1e1e1; padding-left: 2px; }
.inst button { display: flex; align-items: center; gap: 1px; }
.inst svg { width: 12px; height: 12px; }
table { width: 128px; margin-left: 2px; table-layout: fixed; border-collapse: separate; border-spacing: 0; line-height: 9px; }
tr { height: 11px; }
tr:nth-child(5n) { height: 10px; }
th, td { border-bottom: 1px solid #d2d2d2; font-weight: 400; text-align: left; white-space: nowrap; overflow: hidden; height: 10px; }
th { width: 62px; padding-left: 4px; border-right: 1px solid #d2d2d2; }
td { padding-left: 2px; }
.head th { background: #dcdcdc; padding: 0 5px 0 0; font-weight: 700; color: #555; }
.head span { float: left; } .head b { float: right; }
.dim th, .dim td { color: #999; }
td button, td input { display: block; width: 61px; height: 9px; margin-left: -2px; line-height: 7px; }
td button { background: #d6d6d6; border: 1px solid #999; border-bottom-color: #777; }
td input[type="text"] { border: 1px solid #444; padding-left: 3px; }
td input[type="checkbox"] { width: 7px; height: 8px; margin-left: 2px; border: 1px solid #999; }
td input:checked { background: linear-gradient(135deg, #fff 35%, #555 35% 60%, #fff 60%); }
.properties footer { margin-top: auto; height: 18px; display: flex; align-items: center; justify-content: space-between; background: #efefef; padding: 0 2px 2px; }
footer a { color: #3a70c4; }
.properties footer button { width: 45px; height: 11px; border: 1px solid #ddd; background: #f5f5f5; color: #aaa; }

.view { flex: 1; min-width: 0; margin-left: 4px; display: flex; flex-direction: column; background: #fefefe; }
.plan { flex: 1; min-height: 0; width: 100%; display: block; }
.viewbar { height: 12px; flex: none; display: flex; align-items: center; gap: 1px; padding-left: 17px; background: #efefef; }
.viewbar span { width: 29px; }
.viewbar button, .viewbar svg { width: 11px; height: 10px; }
.viewbar button + button { width: 12px; padding-left: 1px; }
.viewbar i { margin-left: 3px; font-size: 6px; }
.grip { margin-left: 316px; width: 9px; height: 8px; border: 1px solid #aaa; background: #f8f8f8; }
.rail { width: 11px; flex: none; background: #eee; border-right: 2px solid #ccc; }
.knob { width: 8px; height: 10px; margin-top: 280px; border: 1px solid #bbb; background: #e4e4e4; }

.plan text { font-family: "Liberation Sans", Arial, sans-serif; fill: #333; }
.plan .t20 text { font-size: 20px; } .plan .t21 text { font-size: 21px; } .plan .t26 text, .plan .uvg { font-size: 26px; fill: #222; }
.plan .red text { fill: #7f2a40; }
.ln, .bx { stroke: #8a8a8a; stroke-width: 1; fill: none; }
.bx { fill: #fefefe; stroke: #777; }
.dk { stroke: #777; stroke-width: 2; fill: none; }
.axis { stroke: #888; stroke-width: 3; }
.axis2 { stroke: #777; stroke-width: 2; }
.short { stroke: #777; stroke-width: 1; stroke-dasharray: 5 5; }
.dimline { stroke: #bd6b7c; stroke-width: 1; fill: none; }
.deck { stroke: #d4d4d4; }

.status { height: 14px; flex: none; display: flex; align-items: center; background: linear-gradient(#d0d0d0, #dedede); border-top: 1px solid #aaa; border-bottom: 1px solid #888; gap: 4px; }
.status p { width: 600px; padding-left: 1px; white-space: nowrap; color: #444; }
.status svg { width: 11px; height: 11px; }
.status select { width: 100%; height: 12px; background: #fafafa; padding-left: 3px; }
.ws { width: 122px; } .mm { width: 92px; color: #999; }
.fill { flex: 1; }
.zero { width: 34px; }

.taskbar { height: 23px; flex: none; display: flex; align-items: center; background: linear-gradient(90deg, #16080f, #2a0b1b 50%, #2c0c1c); color: #e6dbe2; }
.taskbar button { width: 36px; height: 22px; margin-right: 1px; display: flex; justify-content: center; align-items: center; }
.taskbar button:first-child { width: 34px; }
.taskbar button svg { width: 21px; height: 21px; }
.taskbar .lit { background: linear-gradient(90deg, #60545c, #2d1f28); }
.taskbar .lit2 { background: linear-gradient(90deg, #3a2832, #1e0f18); }
.taskbar .bright { background: linear-gradient(90deg, #b9b0b6, #766a72); }
.tray { width: 11px; height: 11px; margin-right: 4px; }
.lang, .up { width: 16px; }
time { width: 40px; text-align: center; line-height: 10px; }
.peek { width: 9px; height: 22px; border-left: 1px solid #666; background: #3a2430; }

.mark { position: absolute; right: 0; bottom: 32px; display: flex; align-items: center; gap: 7px; }
.mark svg { width: 26px; height: 24px; }
.mark span { font: 700 20px/24px "Liberation Sans", Arial, sans-serif; color: #77777c; }
</style>
